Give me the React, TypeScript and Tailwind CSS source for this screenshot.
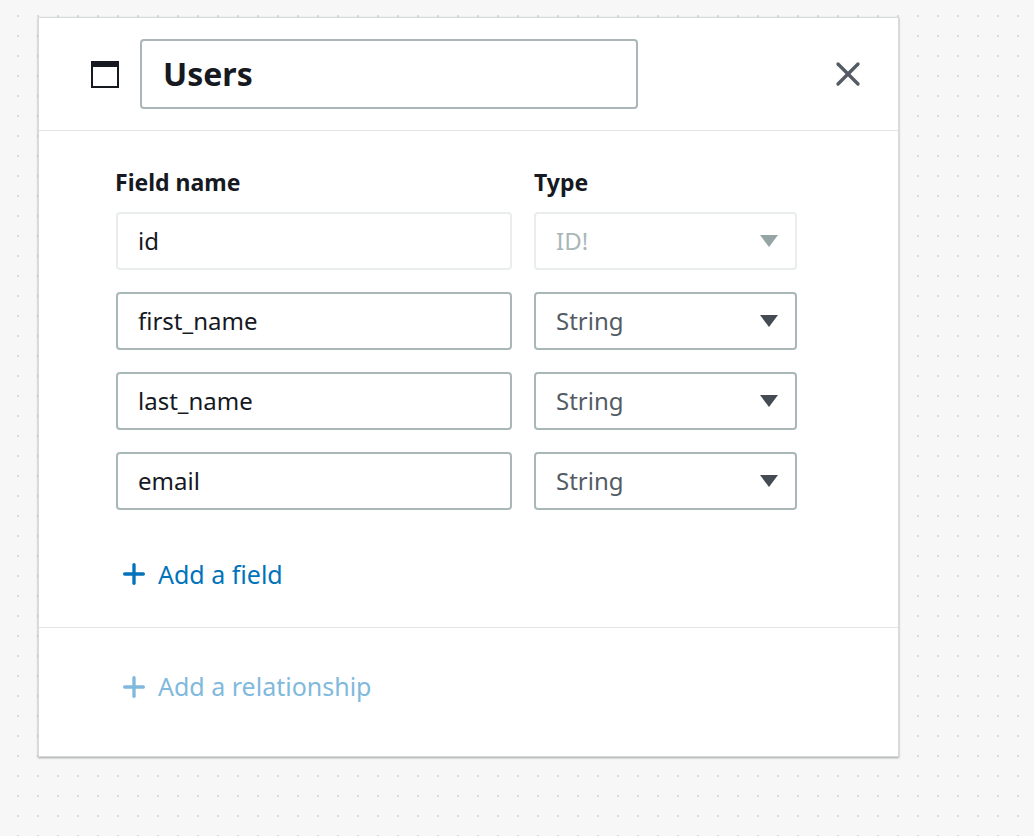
import { X, Plus } from 'lucide-react';

const rows = [
  { name: 'first_name', type: 'String' },
  { name: 'last_name', type: 'String' },
  { name: 'email', type: 'String' },
];

const Caret = ({ color }: { color: string }) => (
  <svg width="20" height="14" viewBox="0 0 20 14">
    <path d="M1 1h18L10 13z" fill={color} />
  </svg>
);

export default function App() {
  return (
    <div className="h-[836px] w-[1034px] bg-[#f7f7f7] bg-[radial-gradient(#dcdcdc_1.3px,transparent_1.5px)] bg-[size:20px_20px] bg-[position:8px_6px] pl-[38px] pt-[17px] font-['Open_Sans',sans-serif] text-[#16191f]">
      <div className="w-[861px] border border-[#d5dbdb] bg-white shadow-[0_1px_2px_rgba(0,0,0,0.35)]">
        <div className="flex h-[113px] items-center border-b border-[#e1e4e4] pl-[52px] pr-[30px]">
          <div className="h-[27px] w-[28px] border-2 border-[#16191f] border-t-[6px]" />
          <div className="ml-[21px] flex h-[70px] w-[498px] items-center rounded border-2 border-[#aab7b8] px-[21px] text-[32px] font-bold">
            Users
          </div>
          <X className="ml-auto h-10 w-10 text-[#545b64]" strokeWidth={2} />
        </div>
        <div className="border-b border-[#e1e4e4] pb-[34px] pl-[76px] pt-[34px]">
          <div className="flex text-[23px] font-bold">
            <div className="w-[419px]">Field name</div>
            <div>Type</div>
          </div>
          <div className="mt-[12px] flex flex-col gap-[22px] pl-[1px]">
            <div className="flex gap-[22px]">
              <div className="flex h-[58px] w-[396px] items-center rounded border-2 border-[#eaeded] px-[20px] text-[24px]">id</div>
              <div className="flex h-[58px] w-[263px] items-center justify-between rounded border-2 border-[#eaeded] pl-[20px] pr-[16px] text-[24px] text-[#aab7b8]">
                ID!
                <Caret color="#95a5a6" />
              </div>
            </div>
            {rows.map((r) => (
              <div key={r.name} className="flex gap-[22px]">
                <div className="flex h-[58px] w-[396px] items-center rounded border-2 border-[#aab7b8] px-[20px] text-[24px]">{r.name}</div>
                <div className="flex h-[58px] w-[263px] items-center justify-between rounded border-2 border-[#aab7b8] pl-[20px] pr-[16px] text-[24px] text-[#545b64]">
                  {r.type}
                  <Caret color="#444b53" />
                </div>
              </div>
            ))}
          </div>
          <div className="mt-[46px] flex items-center gap-[8px] pl-[3px] text-[25px] text-[#0073bb]">
            <Plus className="h-8 w-8" strokeWidth={2.5} />
            Add a field
          </div>
        </div>
        <div className="flex h-[128px] items-start pl-[79px] pt-[40px]">
          <div className="flex items-center gap-[8px] text-[25px] text-[#7fb9dd]">
            <Plus className="h-8 w-8" strokeWidth={2.5} />
            Add a relationship
          </div>
        </div>
      </div>
    </div>
  );
}
